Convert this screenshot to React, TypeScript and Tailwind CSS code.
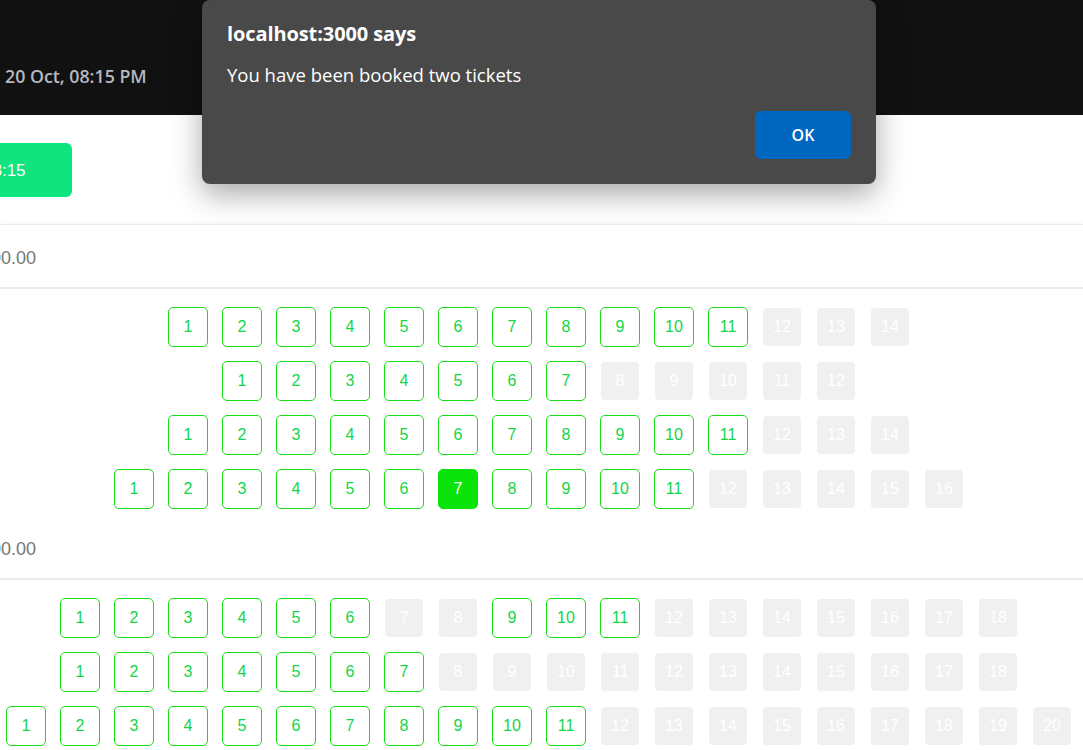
import React from 'react'

type SeatState = 'open' | 'taken' | 'picked'

interface SeatRow {
  count: number
  taken: number[]
  picked?: number[]
}

const upperRows: SeatRow[] = [
  { count: 14, taken: [12, 13, 14] },
  { count: 12, taken: [8, 9, 10, 11, 12] },
  { count: 14, taken: [12, 13, 14] },
  { count: 16, taken: [12, 13, 14, 15, 16], picked: [7] }
]

const lowerRows: SeatRow[] = [
  { count: 18, taken: [7, 8, 12, 13, 14, 15, 16, 17, 18] },
  { count: 18, taken: [8, 9, 10, 11, 12, 13, 14, 15, 16, 17, 18] },
  { count: 20, taken: [12, 13, 14, 15, 16, 17, 18, 19, 20] }
]

const stateOf = (row: SeatRow, n: number): SeatState => {
  if (row.picked?.includes(n)) return 'picked'
  if (row.taken.includes(n)) return 'taken'
  return 'open'
}

const Seat = ({ n, state }: { n: number; state: SeatState }) => {
  const base = 'm-[7px] flex h-10 w-10 items-center justify-center rounded-[5px] border text-[16px]'
  if (state === 'taken') {
    return <div className={`${base} border-white bg-[#f0f0f0] text-white`}>{n}</div>
  }
  if (state === 'picked') {
    return <div className={`${base} border-[#0ae40a] bg-[#0ae40a] text-white`}>{n}</div>
  }
  return <div className={`${base} border-[#16de16] bg-white text-[#12d64a]`}>{n}</div>
}

const SeatBlock = ({ rows }: { rows: SeatRow[] }) => (
  <div className="flex w-[1078px] flex-col items-center pt-[11px]">
    {rows.map((row, i) => (
      <div key={i} className="flex">
        {Array.from({ length: row.count }, (_, k) => k + 1).map((n) => (
          <Seat key={n} n={n} state={stateOf(row, n)} />
        ))}
      </div>
    ))}
  </div>
)

const Price = ({ value }: { value: string }) => (
  <div className="flex h-[62px] items-center pt-[4px]">
    <span className="ml-[-19px] text-[18px] text-[#777]">{value}</span>
  </div>
)

export default function App() {
  return (
    <div
      className="relative h-[750px] w-[1083px] overflow-hidden bg-white"
      style={{ fontFamily: '"Liberation Sans", Arial, sans-serif' }}
    >
      <header className="h-[115px] bg-[#111111] pl-[5px] pt-[63px]">
        <span
          className="text-[17.8px] font-semibold text-[#b6b9c0]"
          style={{ fontFamily: '"Open Sans", "Noto Sans", sans-serif' }}
        >
          20 Oct, 08:15 PM
        </span>
      </header>

      <div className="pb-[27px] pt-[28px]">
        <button className="ml-[-40px] flex h-[54px] w-[112px] items-center rounded-[6px] bg-[#10e47e] pl-[23px] pt-[2px] text-[17px] text-white">
          08:15
        </button>
      </div>

      <div className="border-t border-[#efebed] shadow-[0_-2px_4px_rgba(0,0,0,0.03)]">
        <Price value="200.00" />
        <div className="h-[2px] bg-[#ececec]" />
        <SeatBlock rows={upperRows} />
        <Price value="200.00" />
        <div className="h-[2px] bg-[#ececec]" />
        <SeatBlock rows={lowerRows} />
      </div>

      {/* browser alert */}
      <div
        className="absolute left-[202px] top-0 flex h-[184px] w-[674px] flex-col rounded-[8px] bg-[#494949] px-[25px] pt-[19px] text-white shadow-[0_10px_30px_rgba(0,0,0,0.35)]"
        style={{ fontFamily: '"Open Sans", "Noto Sans", sans-serif' }}
      >
        <div className="text-[20px] font-bold leading-[30px] tracking-[-0.1px]">localhost:3000 says</div>
        <div className="mt-[12px] text-[18.5px] leading-[28px]">
          You have been booked two tickets
        </div>
        <div className="mt-auto flex justify-end pb-[25px]">
          <button className="h-[48px] w-[96px] rounded-[6px] bg-[#0067c0] text-[16px] font-semibold text-white">
            OK
          </button>
        </div>
      </div>
    </div>
  )
}
